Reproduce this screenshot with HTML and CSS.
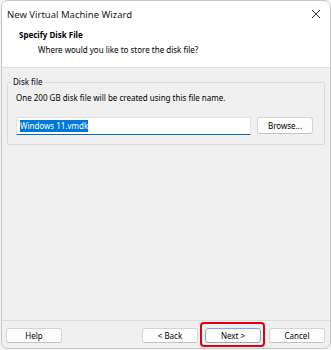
FILE: index.html
```html
<!DOCTYPE html>
<html lang="en">
<head>
<meta charset="utf-8">
<title>New Virtual Machine Wizard</title>
<link rel="stylesheet" href="styles.css">
</head>
<body>
<div class="window">
  <div class="titlebar">
    <span class="title">New Virtual Machine Wizard</span>
    <svg class="close" width="10" height="10" viewBox="0 0 10 10"><path d="M1 1L9 9M9 1L1 9" stroke="#333" stroke-width="1" fill="none"/></svg>
  </div>
  <div class="header">
    <div class="h-title">Specify Disk File</div>
    <div class="h-sub">Where would you like to store the disk file?</div>
  </div>
  <div class="content">
    <fieldset class="group">
      <legend>Disk file</legend>
      <p class="desc">One 200 GB disk file will be created using this file name.</p>
      <div class="file-row">
        <div class="input"><span class="sel">Windows 11.vmdk</span></div>
        <button class="btn browse">Browse...</button>
      </div>
    </fieldset>
  </div>
  <div class="footer">
    <button class="btn">Help</button>
    <div class="spacer"></div>
    <button class="btn">&lt; Back</button>
    <span class="highlight"><button class="btn primary">Next &gt;</button></span>
    <button class="btn">Cancel</button>
  </div>
</div>
</body>
</html>
```
FILE: styles.css
```css
html, body {
  margin: 0;
  padding: 0;
}
body {
  background: #f4f4f4;
  font-family: "Noto Sans", "Open Sans", sans-serif;
  color: #000;
  font-size: 8px;
}
.window {
  box-sizing: border-box;
  width: 330px;
  height: 349px;
  margin-left: 1px;
  border: 1px solid #c6c6c6;
  border-radius: 7px;
  overflow: hidden;
  display: flex;
  flex-direction: column;
  background: #f0f0f0;
}
.titlebar {
  height: 26px;
  background: #fff;
  display: flex;
  align-items: center;
  padding: 0 9px 0 5px;
  flex: none;
}
.title {
  font-size: 9.5px;
  color: #1a1a1a;
  flex: 1;
}
.close {
  display: block;
}
.header {
  background: #fff;
  padding: 2px 0 11px 17px;
  border-bottom: 1px solid #dcdcdc;
  flex: none;
}
.h-title {
  font-weight: bold;
  line-height: 12px;
  font-size: 8px;
}
.h-sub {
  line-height: 12px;
  margin-top: 3px;
  padding-left: 19px;
}
.content {
  flex: 1;
  padding: 8px 5px 0 5px;
}
.group {
  margin: 0;
  border: 1px solid #dadada;
  border-radius: 2px;
  padding: 0 9px 9px 8px;
}
.group legend {
  padding: 0 2px;
  margin-left: -5px;
  line-height: 12px;
}
.desc {
  margin: 4px 0 0 0;
  line-height: 12px;
}
.file-row {
  display: flex;
  align-items: flex-start;
  gap: 6px;
  margin-top: 13px;
}
.input {
  box-sizing: border-box;
  width: 235px;
  height: 18px;
  background: #fff;
  border: 1px solid #e2e2e2;
  border-bottom: 1px solid #0067c0;
  border-radius: 2px 2px 0 0;
  padding: 0 3px;
  display: flex;
  align-items: center;
}
.sel {
  background: #0078d7;
  color: #fff;
  line-height: 12px;
}
.btn {
  box-sizing: border-box;
  font-family: inherit;
  font-size: 8px;
  color: #000;
  background: #fdfdfd;
  border: 1px solid #d4d4d4;
  border-bottom-color: #c2c2c2;
  border-radius: 3px;
  height: 15px;
  width: 56px;
  padding: 0;
  line-height: 13px;
}
.browse {
  height: 17px;
}
.footer {
  flex: none;
  display: flex;
  align-items: flex-start;
  border-top: 1px solid #dcdcdc;
  padding: 7px 5px 5px 4px;
  gap: 7px;
}
.spacer {
  flex: 1;
}
.highlight {
  position: relative;
  display: block;
  height: 15px;
}
.highlight::after {
  content: "";
  position: absolute;
  top: -6px;
  bottom: -4px;
  left: -5px;
  right: -4px;
  border: 2px solid #e0000e;
  border-radius: 4px;
  pointer-events: none;
}
.primary {
  border-color: #86a9d1;
}
.footer .highlight + .btn {
  margin-left: 1px;
}
```
